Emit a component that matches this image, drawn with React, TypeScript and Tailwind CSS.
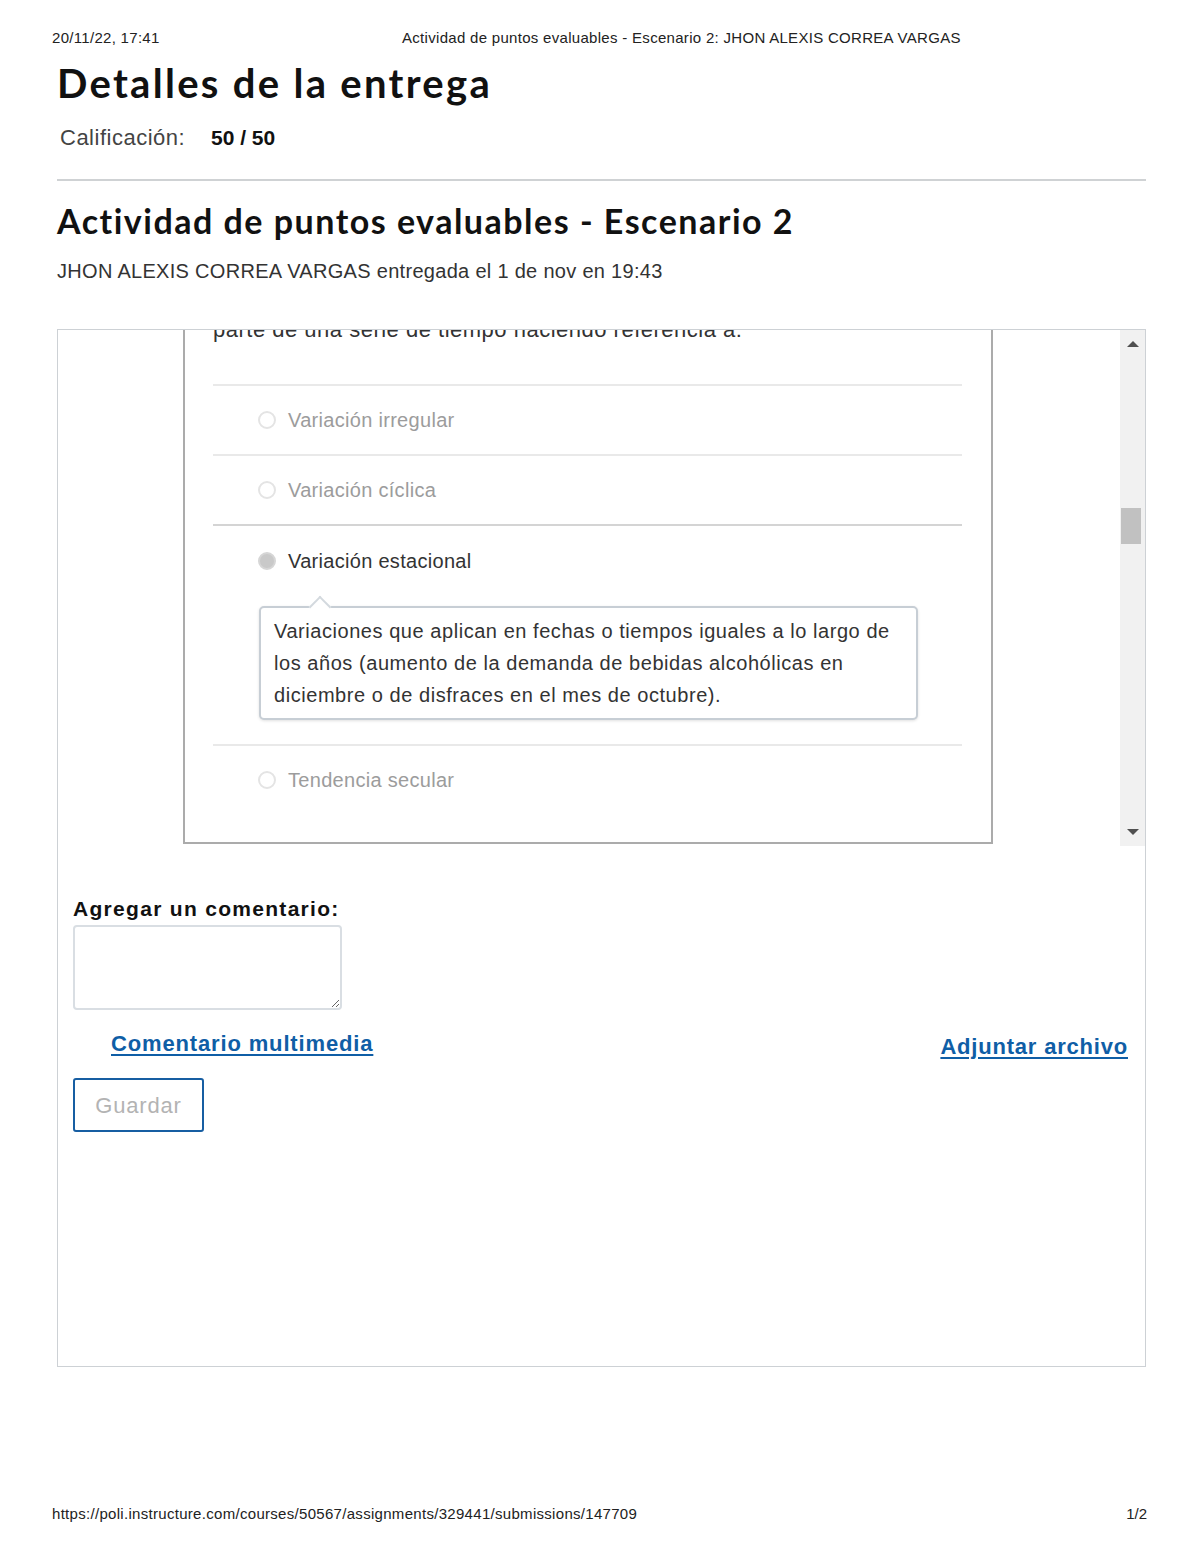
import { type FC } from 'react'

const sans = "font-['Liberation_Sans',Arial,sans-serif]"
const heading = "font-['Lato','Liberation_Sans',sans-serif]"

interface OptionRowProps {
  label: string
}

const Radio: FC<{ selected?: boolean }> = ({ selected }) => (
  <span
    className={`w-[18px] h-[18px] rounded-full flex-shrink-0 border-2 ${
      selected ? 'bg-[#c9c9c9] border-[#d6d6d6]' : 'bg-white border-[#e4e4e4]'
    }`}
  />
)

const OptionRow: FC<OptionRowProps> = ({ label }) => (
  <div className="border-t-2 border-[#e9e9e9]">
    <div className="flex items-center gap-[12px] pl-[45px] py-[22px]">
      <Radio />
      <span className="text-[20px] leading-[24px] tracking-[0.3px] text-[#9c9c9c]">{label}</span>
    </div>
  </div>
)

const Scrollbar: FC = () => (
  <div className="w-[25px] bg-[#f1f1f1] flex flex-col items-center justify-between py-[10px]">
    <svg width="12" height="8" viewBox="0 0 12 8"><path d="M0 7 L6 1 L12 7 Z" fill="#505050" /></svg>
    <div className="flex-1 w-full relative">
      <div className="absolute left-[1px] w-[20px] top-[160px] h-[36px] bg-[#c1c1c1]" />
    </div>
    <svg width="12" height="8" viewBox="0 0 12 8"><path d="M0 1 L12 1 L6 7 Z" fill="#505050" /></svg>
  </div>
)

export default function App() {
  return (
    <div className={`w-[1200px] h-[1553px] bg-white text-[#222] ${sans} flex flex-col`}>
      <div className="flex pt-[29px] pl-[52px] text-[15px] leading-[18px] text-[#222]">
        <span className="w-[350px] tracking-[0.3px]">20/11/22, 17:41</span>
        <span className="tracking-[0.3px]">Actividad de puntos evaluables - Escenario 2: JHON ALEXIS CORREA VARGAS</span>
      </div>

      <div className="px-[57px] w-[1203px]">
        <h1 className={`${heading} font-bold text-[40px] leading-[48px] tracking-[2.3px] mt-[12px] text-[#111]`}>
          Detalles de la entrega
        </h1>
        <div className="flex items-baseline mt-[18px] pl-[3px]">
          <span className="text-[22px] leading-[26px] tracking-[0.5px] text-[#444] w-[151px]">Calificación:</span>
          <span className="text-[21px] leading-[26px] font-bold text-[#111]">50 / 50</span>
        </div>
        <div className="h-[2px] bg-[#cfd2d4] mt-[28px]" />
        <h2 className={`${heading} font-bold text-[34px] leading-[42px] tracking-[1.5px] mt-[19px] text-[#111]`}>
          Actividad de puntos evaluables - Escenario 2
        </h2>
        <p className="text-[20px] leading-[24px] tracking-[0.3px] mt-[17px] text-[#333]">
          JHON ALEXIS CORREA VARGAS entregada el 1 de nov en 19:43
        </p>

        <div className="mt-[46px] border border-[#cdd1d5] h-[1038px] flex flex-col">
          <div className="flex h-[516px] overflow-hidden">
            <div className="flex-1 overflow-hidden">
              <div className="ml-[125px] w-[810px] -mt-[40px] border-2 border-[#ababab] bg-white">
                <div className="pt-[26px] pl-[28px] pr-[29px]">
                  <p className="text-[22px] leading-[24px] tracking-[0.5px] text-[#333] mb-[42px]">
                    parte de una serie de tiempo haciendo referencia a:
                  </p>
                  <OptionRow label="Variación irregular" />
                  <OptionRow label="Variación cíclica" />
                  <div className="border-t-2 border-[#d4d4d4]">
                    <div className="flex items-center gap-[12px] pl-[45px] pt-[23px]">
                      <Radio selected />
                      <span className="text-[20px] leading-[24px] tracking-[0.3px] text-[#333]">Variación estacional</span>
                    </div>
                    <div className="relative ml-[46px] mr-[44px] mt-[33px] mb-[24px] border-2 border-[#c7ced5] rounded-[5px] shadow-[0_1px_3px_rgba(0,0,0,0.12)] bg-white px-[13px] py-[7px]">
                      <div className="absolute -top-[9px] left-[51px] w-[16px] h-[16px] rotate-45 bg-white border-l-2 border-t-2 border-[#d3d9de]" />
                      <p className="relative text-[20px] leading-[32px] tracking-[0.55px] text-[#333]">
                        Variaciones que aplican en fechas o tiempos iguales a lo largo de los años (aumento de la demanda de bebidas alcohólicas en diciembre o de disfraces en el mes de octubre).
                      </p>
                    </div>
                  </div>
                  <div className="border-t-2 border-[#e9e9e9]">
                    <div className="flex items-center gap-[12px] pl-[45px] pt-[22px] pb-[50px]">
                      <Radio />
                      <span className="text-[20px] leading-[24px] tracking-[0.3px] text-[#9c9c9c]">Tendencia secular</span>
                    </div>
                  </div>
                </div>
              </div>
            </div>
            <Scrollbar />
          </div>

          <div className="pl-[15px] pr-[17px]">
            <label className="block mt-[51px] text-[21px] leading-[24px] font-bold tracking-[1.3px] text-[#111]">
              Agregar un comentario:
            </label>
            <textarea className="block mt-[4px] w-[269px] h-[85px] border-2 border-[#d9dee3] rounded-[4px] resize-y" />
            <div className="flex justify-between mt-[21px]">
              <a className="ml-[38px] text-[22px] leading-[26px] font-bold text-[#0f5ea6] underline underline-offset-[3px] tracking-[0.85px]">
                Comentario multimedia
              </a>
              <a className="mt-[3px] text-[22px] leading-[26px] font-bold text-[#0f5ea6] underline underline-offset-[3px] tracking-[0.8px]">
                Adjuntar archivo
              </a>
            </div>
            <button
              type="button"
              className="mt-[18px] w-[131px] h-[54px] border-2 border-[#175ea2] rounded-[3px] text-[22px] tracking-[0.8px] text-[#b3b3b3]"
            >
              Guardar
            </button>
          </div>
        </div>
      </div>

      <div className="flex justify-between pl-[52px] pr-[53px] mt-[138px] text-[15px] leading-[18px] text-[#222]">
        <span className="tracking-[0.3px]">https://poli.instructure.com/courses/50567/assignments/329441/submissions/147709</span>
        <span>1/2</span>
      </div>
    </div>
  )
}
